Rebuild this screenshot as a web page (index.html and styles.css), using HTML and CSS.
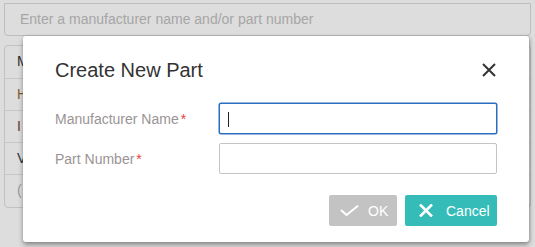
FILE: index.html
```html
<!DOCTYPE html>
<html>
<head>
<meta charset="utf-8">
<link rel="stylesheet" href="styles.css">
</head>
<body>
<div class="page">
  <div class="search">Enter a manufacturer name and/or part number</div>
  <div class="table">
    <div class="row head"><span class="cell">M</span></div>
    <div class="row c1"><span class="cell">H</span></div>
    <div class="row c2"><span class="cell">I</span></div>
    <div class="row c3"><span class="cell">V</span></div>
    <div class="row c4"><span class="cell">(</span></div>
  </div>
</div>

<div class="modal">
  <div class="modal-head">
    <h1 class="title">Create New Part</h1>
    <svg class="close" width="14" height="14" viewBox="0 0 14 14"><path d="M1 1 L13 13 M13 1 L1 13" stroke="#333" stroke-width="2" fill="none"/></svg>
  </div>
  <div class="form">
    <label class="label">Manufacturer Name<span class="req">*</span></label>
    <div class="field focused"><span class="caret"></span></div>
    <label class="label">Part Number<span class="req">*</span></label>
    <div class="field"></div>
  </div>
  <div class="actions">
    <button class="btn ok"><svg width="19" height="11" viewBox="0 0 19 11"><path d="M1 5 L6.5 10 L18 0.8" stroke="#fff" stroke-width="2" fill="none"/></svg><span class="ok-text">OK</span></button>
    <button class="btn cancel"><svg width="14" height="13" viewBox="0 0 14 13"><path d="M1 0.5 L13 12.5 M13 0.5 L1 12.5" stroke="#fff" stroke-width="2.6" fill="none"/></svg><span class="cancel-text">Cancel</span></button>
  </div>
</div>
</body>
</html>
```
FILE: styles.css
```css
html, body {
  margin: 0;
  padding: 0;
  background: #dddddd;
  font-family: "Liberation Sans", Arial, sans-serif;
  overflow: hidden;
}
.page {
  padding: 3px 4px 0 4px;
  width: 527px;
}
.search {
  height: 31px;
  border: 1px solid #bdbdbd;
  border-radius: 0 0 4px 4px;
  padding-left: 15px;
  font-size: 14px;
  line-height: 31px;
  color: #a6a6a6;
}
.table {
  margin-top: 9px;
  border: 1px solid #c2c2c2;
  border-radius: 4px;
}
.row {
  height: 31px;
  line-height: 31px;
  padding-left: 12px;
  font-size: 14px;
  border-top: 1px solid #c6c6c6;
  color: #2e2e2e;
}
.cell {
  white-space: nowrap;
}
.row.head { border-top: none; height: 32px; }
.row.c1 { color: #8a5a2e; }
.row.c2 { color: #5a3b2a; }
.row.c3 { color: #2b3440; }
.row.c4 { color: #9a9a9a; height: 32px; }

.modal {
  position: absolute;
  left: 23px;
  top: 36px;
  width: 442px;
  height: 184px;
  padding: 22px 32px 0 32px;
  background: #fff;
  border-radius: 3px;
  box-shadow: 0 3px 5px rgba(0,0,0,0.35), 1px 0 3px rgba(0,0,0,0.15);
}
.modal-head {
  display: flex;
  justify-content: space-between;
  align-items: center;
  height: 24px;
}
.title {
  margin: 0;
  font-size: 20px;
  font-weight: normal;
  line-height: 24px;
  color: #333;
}
.close { margin-right: 1px; }
.form {
  margin-top: 21px;
  display: grid;
  grid-template-columns: 164px 278px;
  row-gap: 9px;
  align-items: center;
}
.label {
  font-size: 14px;
  color: #9a9494;
}
.req {
  color: #e6433a;
  margin-left: 2px;
}
.field {
  position: relative;
  box-sizing: border-box;
  height: 31px;
  border: 1px solid #c4c4c4;
  border-radius: 2px;
  background: #fff;
}
.field.focused {
  border-color: #2a6fbd;
  box-shadow: 0 0 0 0.5px #2a6fbd;
}
.caret {
  position: absolute;
  left: 8px;
  top: 8px;
  width: 1px;
  height: 15px;
  background: #222;
}
.actions {
  margin-top: 21px;
  display: flex;
  justify-content: flex-end;
  gap: 8px;
}
.btn {
  display: flex;
  align-items: center;
  height: 31px;
  border: none;
  border-radius: 2px;
  font-family: "Liberation Sans", Arial, sans-serif;
  font-size: 14px;
  color: #fff;
  padding: 0;
}
.btn.ok {
  width: 68px;
  background: #c3c3c3;
  padding-left: 11px;
}
.btn.ok .ok-text { margin-left: 9px; }
.btn.cancel {
  width: 92px;
  background: #35bcb8;
  padding-left: 14px;
}
.btn.cancel .cancel-text { margin-left: 13px; }
```
